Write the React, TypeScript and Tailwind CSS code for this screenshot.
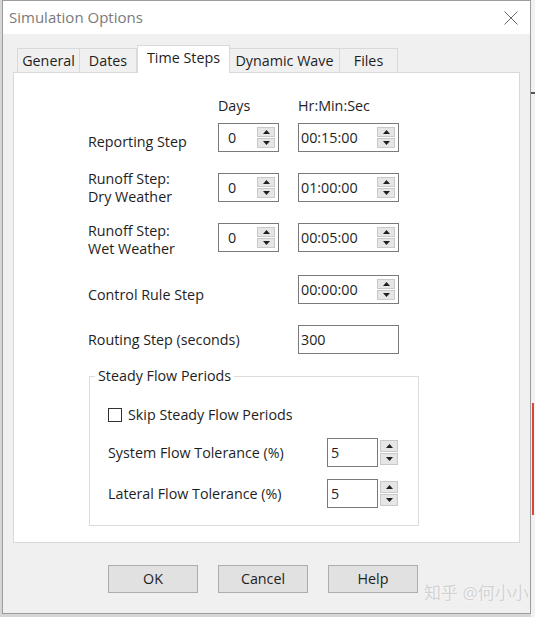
import clsx from "clsx";

const FONT = { fontFamily: '"Open Sans", "Noto Sans CJK SC", sans-serif' };

function Arrow({ down }: { down?: boolean }) {
  return (
    <div className="flex h-[10px] w-[18px] items-center justify-center border border-[#c9c9c9] bg-[#e6e6e6]">
      <svg width="7" height="4" viewBox="0 0 7 4">
        <path d={down ? "M0 0H7L3.5 4z" : "M3.5 0L7 4H0z"} fill="#1f1f1f" />
      </svg>
    </div>
  );
}

function Arrows({ className }: { className?: string }) {
  return (
    <div className={clsx("flex flex-col gap-[1px]", className)}>
      <Arrow />
      <Arrow down />
    </div>
  );
}

function SpinBox({ value, className, textClass }: { value: string; className: string; textClass: string }) {
  return (
    <div className={clsx("flex h-[29px] items-center justify-between border border-[#7a7a7a] bg-white pr-[3px]", className)}>
      <span className={clsx("leading-[20px]", textClass)}>{value}</span>
      <Arrows />
    </div>
  );
}

function Tab({ label, active, className }: { label: string; active?: boolean; className: string }) {
  if (active) {
    return (
      <div
        className={clsx(
          "relative z-10 -mb-[1px] flex h-[28px] items-center justify-center border border-b-0 border-[#d9d9d9] bg-white pb-[3px]",
          className
        )}
      >
        {label}
      </div>
    );
  }
  return (
    <div className={clsx("flex h-[24px] items-center justify-center border border-b-0 border-[#d9d9d9] bg-[#f0f0f0]", className)}>
      {label}
    </div>
  );
}

function Button({ label }: { label: string }) {
  return (
    <div className="flex h-[28px] w-[90px] items-center justify-center border border-[#adadad] bg-[#e1e1e1]">
      {label}
    </div>
  );
}

export default function App() {
  return (
    <div className="relative h-[617px] w-[535px] overflow-hidden bg-[#d6d6d6] text-[14.3px] text-[#1e1e1e]" style={FONT}>
      {/* desktop scraps round the window */}
      <div className="absolute right-0 top-0 h-[617px] w-[4px] bg-[#f2f2f2]" />
      <div className="absolute right-[1px] top-[403px] h-[112px] w-[2px] bg-[#d9443c]" />
      <div className="absolute right-0 top-[92px] h-[2px] w-[4px] bg-[#555]" />

      <div className="ml-[2px] flex h-[614px] w-[529px] flex-col border border-[#9c9c9c] bg-[#f0f0f0]">
        <div className="flex h-[33px] items-center justify-between bg-white pl-[6px] pr-[12px]">
          <span className="text-[15px] text-[#7a7a7a]">Simulation Options</span>
          <svg width="14" height="14" viewBox="0 0 14 14">
            <path d="M0.5 0.5L13.5 13.5M13.5 0.5L0.5 13.5" stroke="#6a6a6a" strokeWidth="1" />
          </svg>
        </div>

        <div className="flex flex-col px-[10px] pt-[11px]">
          <div className="flex h-[27px] items-end pl-[4px]">
            <Tab label="General" className="w-[63px]" />
            <Tab label="Dates" className="w-[57px] border-l-0" />
            <Tab label="Time Steps" active className="w-[93px]" />
            <Tab label="Dynamic Wave" className="w-[110px] border-l-0" />
            <Tab label="Files" className="w-[58px] border-l-0" />
          </div>

          <div className="flex h-[471px] flex-col border border-[#d9d9d9] bg-white pl-[74px] pt-[23px]">
            <div className="flex h-[20px] leading-[20px]">
              <span className="ml-[130px] w-[80px]">Days</span>
              <span>Hr:Min:Sec</span>
            </div>

            <div className="mt-[7px] flex h-[29px] items-center">
              <span className="mt-[9px] w-[130px] leading-[20px]">Reporting Step</span>
              <SpinBox value="0" className="w-[61px]" textClass="pl-[9px]" />
              <SpinBox value="00:15:00" className="ml-[19px] w-[101px]" textClass="pl-[2px]" />
            </div>

            <div className="mt-[21px] flex h-[29px] items-center">
              <span className="w-[130px] leading-[18px]">
                Runoff Step:
                <br />
                Dry Weather
              </span>
              <SpinBox value="0" className="w-[61px]" textClass="pl-[9px]" />
              <SpinBox value="01:00:00" className="ml-[19px] w-[101px]" textClass="pl-[2px]" />
            </div>

            <div className="mt-[21px] flex h-[29px] items-center">
              <span className="mt-[4px] w-[130px] leading-[18px]">
                Runoff Step:
                <br />
                Wet Weather
              </span>
              <SpinBox value="0" className="w-[61px]" textClass="pl-[9px]" />
              <SpinBox value="00:05:00" className="ml-[19px] w-[101px]" textClass="pl-[2px]" />
            </div>

            <div className="mt-[23px] flex h-[29px] items-center">
              <span className="mt-[10px] w-[210px] leading-[20px]">Control Rule Step</span>
              <SpinBox value="00:00:00" className="w-[101px]" textClass="pl-[2px]" />
            </div>

            <div className="mt-[21px] flex h-[29px] items-center">
              <span className="w-[210px] leading-[20px]">Routing Step (seconds)</span>
              <div className="flex h-[29px] w-[101px] items-center border border-[#7a7a7a] bg-white pl-[2px]">300</div>
            </div>

            <fieldset className="ml-[1px] mt-[12px] h-[160px] w-[330px] border border-[#dcdcdc]">
              <legend className="ml-[5px] px-[3px] leading-[20px]">Steady Flow Periods</legend>
              <div className="flex flex-col pl-[18px]">
                <div className="mt-[19px] flex h-[20px] items-center">
                  <div className="h-[14px] w-[14px] border border-[#333] bg-white" />
                  <span className="ml-[6px] leading-[20px]">Skip Steady Flow Periods</span>
                </div>
                <div className="mt-[13px] flex h-[29px] items-center">
                  <span className="w-[219px] leading-[20px]">System Flow Tolerance (%)</span>
                  <div className="flex h-[29px] w-[51px] items-center border border-[#7a7a7a] bg-white pl-[3px]">5</div>
                  <Arrows className="ml-[2px] [&>div]:h-[12px]" />
                </div>
                <div className="mt-[12px] flex h-[29px] items-center">
                  <span className="w-[219px] leading-[20px]">Lateral Flow Tolerance (%)</span>
                  <div className="flex h-[29px] w-[51px] items-center border border-[#7a7a7a] bg-white pl-[3px]">5</div>
                  <Arrows className="ml-[2px] [&>div]:h-[12px]" />
                </div>
              </div>
            </fieldset>
          </div>

          <div className="ml-[95px] mt-[22px] flex gap-[20px]">
            <Button label="OK" />
            <Button label="Cancel" />
            <Button label="Help" />
          </div>
        </div>
      </div>

      <div
        className="absolute left-[424px] top-[581px] text-[17px] leading-[24px] text-[#d2d2d2]"
        style={{ textShadow: "0 0 2px #fff" }}
      >
        知乎 @何小小
      </div>
    </div>
  );
}
